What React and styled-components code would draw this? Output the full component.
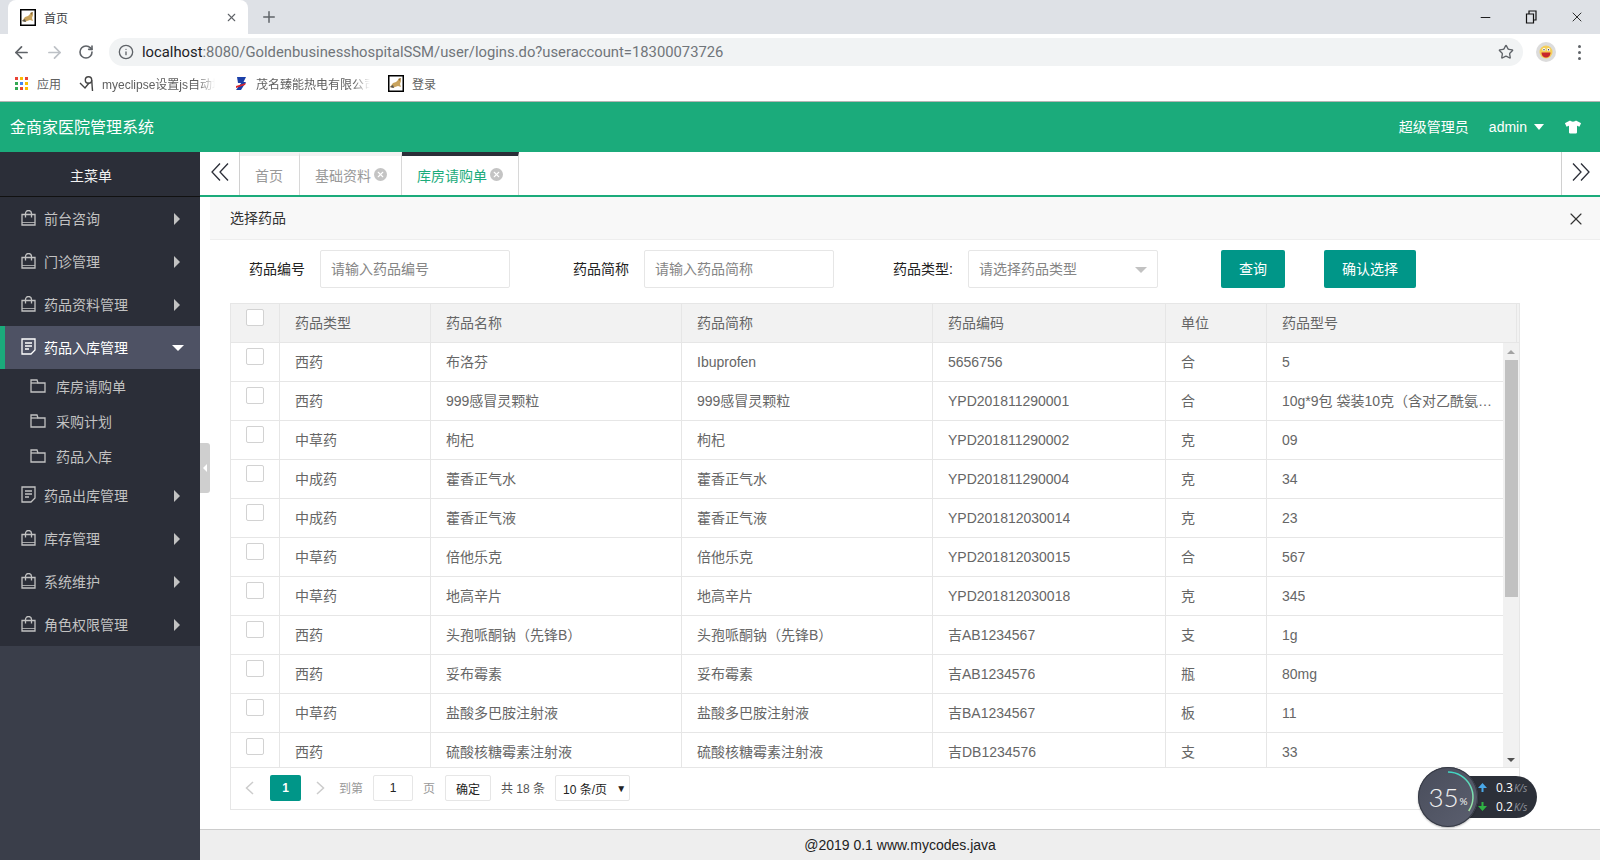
import React from 'react';
import styled, { createGlobalStyle } from 'styled-components';
import { ArrowLeft, ArrowRight, RotateCw, Info, Star, Plus, X, Minus } from 'lucide-react';
import { FaTshirt } from 'react-icons/fa';

const FONT = '"Liberation Sans","Noto Sans CJK SC",sans-serif';
const GREEN = '#1bab7b';
const TEAL = '#009688';
const COLS = '49px 151px 251px 251px 233px 101px 236px';
const HEAD_COLS = '49px 151px 251px 251px 233px 101px 250px 2px';

const Global = createGlobalStyle`
  html, body { margin: 0; padding: 0; overflow: hidden; background: #fff; }
  body { font-family: ${FONT}; font-size: 14px; }
  * { box-sizing: border-box; }
`;

const Page = styled.div`
  position: relative;
  width: 1600px;
  height: 860px;
  display: flex;
  flex-direction: column;
  overflow: hidden;
`;

/* browser chrome */
const TabStrip = styled.div`
  height: 34px;
  flex: none;
  background: #dee1e6;
  display: flex;
  align-items: center;
  padding-left: 8px;
`;
const BrowserTab = styled.div`
  width: 240px;
  height: 34px;
  background: #fff;
  border-radius: 8px 8px 0 0;
  display: flex;
  align-items: center;
  padding: 0 10px 0 12px;
  font-size: 12px;
  color: #3c4043;
`;
const TabTitle = styled.span`
  margin-left: 8px;
  flex: 1;
`;
const NewTab = styled.div`
  width: 18px;
  height: 18px;
  margin-left: 12px;
  color: #5f6368;
  display: flex;
`;
const WindowControls = styled.div`
  margin-left: auto;
  display: flex;
  align-items: center;
  gap: 31px;
  padding-right: 15px;
  color: #111;
`;
const Toolbar = styled.div`
  height: 34px;
  flex: none;
  padding-top: 2px;
  background: #fff;
  display: flex;
  align-items: center;
`;
const NavButtons = styled.div`
  width: 109px;
  flex: none;
  display: flex;
  align-items: center;
  padding-left: 12px;
  gap: 14px;
  color: #5f6368;
`;
const AddressBar = styled.div`
  width: 1414px;
  height: 28px;
  background: #f1f3f4;
  border-radius: 14px;
  display: flex;
  align-items: center;
  padding: 0 9px 0 9px;
  color: #5f6368;
  font-family: Roboto, ${FONT};
  font-size: 14.8px;
`;
const Url = styled.span`
  margin-left: 8px;
  flex: 1;
  color: #70757a;
  b { font-weight: 400; color: #202124; }
`;
const Avatar = styled.div`
  margin-left: 13px;
  width: 20px;
  height: 20px;
`;
const MoreDots = styled.div`
  margin-left: 22px;
  display: flex;
  flex-direction: column;
  gap: 3px;
  i { width: 3px; height: 3px; border-radius: 50%; background: #5f6368; display: block; }
`;
const Bookmarks = styled.div`
  height: 34px;
  flex: none;
  background: #fff;
  border-bottom: 1px solid #b4b4b4;
  display: flex;
  align-items: center;
  padding: 0 0 2px 15px;
  font-size: 12px;
  color: #5f5f5f;
`;
const Bookmark = styled.div`
  display: flex;
  align-items: center;
  width: ${p => p.$w}px;
  flex: none;
`;
const BookmarkLabel = styled.span`
  margin-left: ${p => p.$gap || 8}px;
  white-space: nowrap;
  overflow: hidden;
  max-width: ${p => p.$max || 200}px;
  ${p => p.$fade ? '-webkit-mask-image: linear-gradient(90deg,#000 85%,transparent); mask-image: linear-gradient(90deg,#000 85%,transparent);' : ''}
`;
const AppsGrid = styled.div`
  display: grid;
  grid-template-columns: repeat(3, 3px);
  grid-auto-rows: 3px;
  gap: 2px;
  i { display: block; }
`;

/* app header */
const AppBar = styled.header`
  height: 50px;
  flex: none;
  background: ${GREEN};
  color: #fff;
  display: flex;
  align-items: center;
  padding: 0 19px 0 10px;
`;
const Brand = styled.div`
  font-size: 16px;
  margin-right: auto;
  padding-bottom: 2px;
`;
const Role = styled.span`
  font-size: 14px;
  padding-bottom: 2px;
`;
const UserName = styled.span`
  font-size: 14px;
  margin-left: 20px;
`;
const DownCaret = styled.i`
  width: 0;
  height: 0;
  margin-left: 7px;
  border-left: 5px solid transparent;
  border-right: 5px solid transparent;
  border-top: 6px solid #fff;
`;
const Shirt = styled.div`
  margin-left: 21px;
  display: flex;
  font-size: 16px;
`;

/* sidebar */
const Main = styled.div`
  flex: 1;
  display: flex;
  min-height: 0;
`;
const Sidebar = styled.aside`
  width: 200px;
  flex: none;
  background: #3a3e4a;
`;
const SideHead = styled.div`
  height: 45px;
  background: #2b2e38;
  border-bottom: 1px solid #111;
  color: #f2f2f2;
  display: flex;
  align-items: center;
  justify-content: center;
  padding: 2px 18px 0 0;
`;
const MenuList = styled.nav`
  background: #2b2e38;
`;
const MenuItem = styled.div`
  height: 43px;
  display: flex;
  align-items: center;
  padding: 0 16px 2px 21px;
  color: ${p => p.$active ? '#fff' : '#c2c2c2'};
  background: ${p => p.$active ? '#4e5264' : 'transparent'};
  box-shadow: ${p => p.$active ? `inset 5px 0 0 ${GREEN}` : 'none'};
`;
const MenuText = styled.span`
  margin-left: 8px;
  margin-right: auto;
`;
const RightCaret = styled.i`
  width: 0;
  height: 0;
  margin: 3px 4px 0 0;
  border-top: 6px solid transparent;
  border-bottom: 6px solid transparent;
  border-left: 6px solid #c2c2c2;
`;
const OpenCaret = styled.i`
  width: 0;
  height: 0;
  margin-top: 3px;
  border-left: 6px solid transparent;
  border-right: 6px solid transparent;
  border-top: 6px solid #fff;
`;
const SubItem = styled.div`
  height: 35px;
  display: flex;
  align-items: center;
  padding: 0 0 2px 30px;
  color: #c2c2c2;
`;
const SubText = styled.span`
  margin-left: 10px;
`;

/* page tabs */
const Right = styled.div`
  flex: 1;
  min-width: 0;
  display: flex;
  flex-direction: column;
`;
const PageTabs = styled.div`
  height: 45px;
  flex: none;
  border-bottom: 2px solid ${GREEN};
  display: flex;
  background: #fff;
`;
const ScrollTab = styled.div`
  width: ${p => p.$end ? 39 : 40}px;
  flex: none;
  display: flex;
  justify-content: center;
  padding-top: 11px;
  color: #2b2e38;
  ${p => p.$end ? 'margin-left: auto; border-left: 1px solid #d0d0d0;' : 'border-right: 1px solid #d0d0d0;'}
`;
const PageTab = styled.div`
  width: ${p => p.$w}px;
  flex: none;
  border-top: 4px solid ${p => p.$active ? '#2b2e38' : '#f2f2f2'};
  border-right: 1px solid #d8d8d8;
  display: flex;
  align-items: center;
  padding: 0 0 2px 15px;
  color: ${p => p.$active ? GREEN : '#999'};
`;
const TabClose = styled.i`
  margin-left: 3px;
  width: 13px;
  height: 13px;
  border-radius: 50%;
  background: #c4c4c4;
  color: #fff;
  display: flex;
  align-items: center;
  justify-content: center;
`;

/* panel */
const Content = styled.div`
  position: relative;
  flex: 1;
  min-height: 0;
  padding-left: 10px;
  background: #fff;
  display: flex;
  flex-direction: column;
`;
const Handle = styled.div`
  position: absolute;
  left: 0;
  top: 246px;
  width: 10px;
  height: 50px;
  background: #cfcfcf;
  border-radius: 0 3px 3px 0;
  display: flex;
  align-items: center;
  justify-content: center;
  &::before {
    content: '';
    border-top: 4px solid transparent;
    border-bottom: 4px solid transparent;
    border-right: 4px solid #fff;
  }
`;
const PanelHead = styled.div`
  height: 43px;
  flex: none;
  background: #f8f8f8;
  border-bottom: 1px solid #eee;
  display: flex;
  align-items: center;
  justify-content: space-between;
  padding: 0 14px 2px 20px;
  color: #333;
`;
const PanelClose = styled(X)`
  margin-top: 3px;
`;
const Filters = styled.div`
  display: flex;
  align-items: center;
  padding: 10px 0 15px 39px;
`;
const FilterLabel = styled.label`
  width: ${p => p.$w}px;
  flex: none;
  padding-bottom: 2px;
  color: #222;
`;
const TextField = styled.input`
  width: ${p => p.$w}px;
  height: 38px;
  flex: none;
  margin-right: ${p => p.$mr}px;
  border: 1px solid #e6e6e6;
  border-radius: 2px;
  padding: 0 10px;
  font: 14px ${FONT};
  outline: none;
  &::placeholder { color: #858585; opacity: 1; }
`;
const SelectField = styled.div`
  width: 190px;
  height: 38px;
  flex: none;
  margin-right: 63px;
  border: 1px solid #e6e6e6;
  border-radius: 2px;
  padding: 0 10px 2px;
  display: flex;
  align-items: center;
  justify-content: space-between;
  color: #858585;
  &::after {
    content: '';
    margin-top: 3px;
    border-left: 6px solid transparent;
    border-right: 6px solid transparent;
    border-top: 6px solid #c2c2c2;
  }
`;
const PrimaryButton = styled.button`
  width: ${p => p.$w}px;
  height: 38px;
  flex: none;
  margin-right: ${p => p.$mr || 0}px;
  border: 0;
  border-radius: 2px;
  padding: 0 0 2px;
  background: ${TEAL};
  color: #fff;
  font: 14px ${FONT};
`;

/* table */
const TableBox = styled.div`
  width: 1290px;
  height: 507px;
  margin-left: 20px;
  border: 1px solid #e6e6e6;
  display: flex;
  flex-direction: column;
`;
const HeadRow = styled.div`
  height: 39px;
  flex: none;
  display: grid;
  grid-template-columns: ${HEAD_COLS};
  background: #f2f2f2;
  border-bottom: 1px solid #e6e6e6;
`;
const BodyWrap = styled.div`
  height: 424px;
  flex: none;
  display: flex;
`;
const Rows = styled.div`
  width: 1272px;
  flex: none;
  overflow: hidden;
`;
const Row = styled.div`
  height: 39px;
  display: grid;
  grid-template-columns: ${COLS};
  border-bottom: 1px solid #e6e6e6;
`;
const Cell = styled.div`
  border-right: ${p => p.$last ? '0' : '1px solid #e6e6e6'};
  padding: 0 ${p => p.$last ? 10 : 15}px ${p => p.$cjk ? 2 : 0}px 15px;
  color: #666;
  display: flex;
  align-items: center;
  min-width: 0;
  span {
    white-space: nowrap;
    overflow: hidden;
    text-overflow: ellipsis;
  }
`;
const CheckCell = styled.div`
  border-right: 1px solid #e6e6e6;
  padding: 5px 0 0 15px;
`;
const Check = styled.div`
  width: 18px;
  height: 17px;
  background: #fff;
  border: 1px solid #d2d2d2;
  border-radius: 2px;
`;
const Scrollbar = styled.div`
  width: 16px;
  flex: none;
  background: #f1f1f1;
  display: flex;
  flex-direction: column;
  align-items: center;
`;
const ScrollUp = styled.i`
  margin: 7px 0 6px;
  border-left: 4px solid transparent;
  border-right: 4px solid transparent;
  border-bottom: 4px solid #a3a3a3;
`;
const ScrollThumb = styled.div`
  width: 13px;
  height: 237px;
  background: #c1c1c1;
`;
const ScrollDown = styled.i`
  margin-top: auto;
  margin-bottom: 5px;
  border-left: 4px solid transparent;
  border-right: 4px solid transparent;
  border-top: 4px solid #505050;
`;
const Pager = styled.div`
  height: 42px;
  flex: none;
  border-top: 1px solid #e6e6e6;
  padding: 0 0 1px 14px;
  display: flex;
  align-items: center;
  font-size: 12px;
  color: #555;
`;
const PageArrow = styled.div`
  width: ${p => p.$w}px;
  flex: none;
  display: flex;
  color: #ccc;
`;
const CurrentPage = styled.div`
  width: 31px;
  height: 26px;
  flex: none;
  background: ${TEAL};
  border-radius: 2px;
  color: #fff;
  font-weight: 700;
  display: flex;
  align-items: center;
  justify-content: center;
`;
const PagerText = styled.span`
  margin-right: ${p => p.$mr}px;
  padding-bottom: 2px;
  color: ${p => p.$c || '#999'};
  flex: none;
`;
const PagerBox = styled.div`
  width: ${p => p.$w}px;
  height: 26px;
  flex: none;
  margin-right: ${p => p.$mr || 0}px;
  border: 1px solid #e6e6e6;
  border-radius: 2px;
  display: flex;
  align-items: center;
  justify-content: ${p => p.$between ? 'space-between' : 'center'};
  padding: ${p => p.$between ? '0 3px 0 7px' : '0'};
  color: #222;
`;
const SmallArrow = styled.span`
  font-size: 10px;
`;
const FooterBar = styled.footer`
  height: 31px;
  flex: none;
  margin-left: -10px;
  margin-top: auto;
  background: #eee;
  border-top: 1px solid #ccc;
  display: flex;
  align-items: center;
  justify-content: center;
  color: #222;
`;

/* floating speed widget */
const SpeedWidget = styled.div`
  position: absolute;
  left: 1418px;
  top: 767px;
  width: 120px;
  height: 60px;
  display: flex;
  align-items: center;
`;
const SpeedPill = styled.div`
  position: absolute;
  left: 30px;
  top: 9px;
  width: 89px;
  height: 42px;
  background: #2c3039;
  border-radius: 0 21px 21px 0;
  padding-left: 33px;
  display: flex;
  flex-direction: column;
  justify-content: center;
  gap: 5px;
`;
const SpeedLine = styled.div`
  display: flex;
  align-items: center;
  color: #fff;
  font: 12px "Open Sans", sans-serif;
  line-height: 14px;
  em { font-size: 10px; color: #8c909a; margin-left: 1px; }
`;
const SpeedArrow = styled.div`
  width: 9px;
  margin-right: 9px;
  margin-left: -3px;
  display: flex;
  color: ${p => p.$c};
`;
const Gauge = styled.div`
  position: relative;
  width: 60px;
  height: 60px;
  border-radius: 50%;
  background: linear-gradient(135deg, #494d5b, #5b5f6f);
  box-shadow: inset 0 0 0 1px #363a45, 0 1px 2px rgba(0,0,0,.3);
  display: flex;
  align-items: center;
  justify-content: center;
  color: #f2f2f2;
  font: 300 26px Lato, sans-serif;
  small { font-size: 10px; font-weight: 400; margin: 7px 0 0 1px; }
`;
const GaugeRing = styled.svg`
  position: absolute;
  inset: 0;
`;

const ArrowUp = () => (
  <svg width="9" height="9" viewBox="0 0 9 9" fill="currentColor"><path d="M4.500 0L9 5H5.500v4h-2V5H0z" /></svg>
);
const ArrowDown = () => (
  <svg width="9" height="9" viewBox="0 0 9 9" fill="currentColor"><path d="M4.500 9L0 4h3.500V0h2v4H9z" /></svg>
);
const Tomcat = () => (
  <svg width="16" height="17" viewBox="0 0 16 17">
    <rect x=".75" y=".75" width="14.5" height="15.5" fill="#fff" stroke="#000" strokeWidth="1.5" />
    <path d="M2 12l3-4 3-1 3-3 1-1 1 3-1 3 1 3-3-1-3 1-2 1z" fill="#c9a35c" />
    <path d="M2 12l3-2 1 3z" fill="#555" />
    <path d="M10 4l3-1-1 3z" fill="#8c6a2e" />
  </svg>
);
const Eclipse = () => (
  <svg width="15" height="18" viewBox="0 0 15 18" fill="none" stroke="#444" strokeWidth="1.4">
    <circle cx="9.5" cy="5" r="3.2" />
    <path d="M12.700 5l.8 11" />
    <path d="M1 8l5 5 4-5" />
  </svg>
);
const Company = () => (
  <svg width="13" height="15" viewBox="0 0 13 15">
    <path d="M2 1h9L8 7H3z" fill="#1b3fa8" />
    <path d="M7 6h4L6 14H1z" fill="#1b3fa8" />
    <path d="M1 10l10-3-1 2-9 3z" fill="#d9262c" />
  </svg>
);
const Face = () => (
  <svg width="20" height="20" viewBox="0 0 20 20">
    <circle cx="10" cy="10" r="10" fill="#dcdcdc" />
    <circle cx="10" cy="10" r="6.5" fill="#f5cf5a" />
    <circle cx="8" cy="7.5" r="1.6" fill="#fff" /><circle cx="12.5" cy="7.5" r="1.6" fill="#fff" />
    <circle cx="8" cy="7.7" r=".7" fill="#333" /><circle cx="12.5" cy="7.7" r=".7" fill="#333" />
    <path d="M5.500 10.500h9c0 3-2 5-4.500 5s-4.500-2-4.500-5z" fill="#c8262c" />
  </svg>
);
const Bag = () => (
  <svg width="15" height="16" viewBox="0 0 15 16" fill="none" stroke="currentColor" strokeWidth="1.3">
    <path d="M1 4.500h13V15H1z" />
    <path d="M4.500 7.500V3.500a3 3 0 0 1 6 0v4" />
    <path d="M1 12.500h13" strokeWidth=".8" />
  </svg>
);
const Doc = () => (
  <svg width="15" height="17" viewBox="0 0 15 17" fill="none" stroke="currentColor" strokeWidth="1.3">
    <path d="M1 1h13v11l-4 4H1z" />
    <path d="M4 5h7M4 8h7M4 11h4" />
  </svg>
);
const Folder = () => (
  <svg width="16" height="14" viewBox="0 0 16 14" fill="none" stroke="currentColor" strokeWidth="1.3">
    <path d="M1 1h6l1 3h7v9H1z" />
    <path d="M1 4h7" />
  </svg>
);
const DoubleAngle = ({ dir }) => (
  <svg width="18" height="18" viewBox="0 0 18 18" fill="none" stroke="currentColor" strokeWidth="1.300"
    style={dir === 'right' ? { transform: 'scaleX(-1)' } : undefined}>
    <path d="M9 .5L1 9l8 8.500" /><path d="M17 .5L9 9l8 8.500" />
  </svg>
);
const Chev = ({ right }) => (
  <svg width="9" height="14" viewBox="0 0 9 14" fill="none" stroke="currentColor" strokeWidth="1.500">
    <path d={right ? 'M1 1l6.500 6L1 13' : 'M8 1L1.500 7 8 13'} />
  </svg>
);

const MENU_TOP = [
  ['前台咨询', Bag],
  ['门诊管理', Bag],
  ['药品资料管理', Bag],
];
const MENU_BOTTOM = [
  ['药品出库管理', Doc],
  ['库存管理', Bag],
  ['系统维护', Bag],
  ['角色权限管理', Bag],
];
const SUB = ['库房请购单', '采购计划', '药品入库'];
const APP_COLORS = ['#ea4335', '#fbbc04', '#ea4335', '#34a853', '#4285f4', '#fbbc04', '#34a853', '#ea4335', '#fbbc04'];
const HEADERS = ['药品类型', '药品名称', '药品简称', '药品编码', '单位', '药品型号'];
const ROWS = [
  ['西药', '布洛芬', 'Ibuprofen', '5656756', '合', '5'],
  ['西药', '999感冒灵颗粒', '999感冒灵颗粒', 'YPD201811290001', '合', '10g*9包 袋装10克（含对乙酰氨基酚168毫克）'],
  ['中草药', '枸杞', '枸杞', 'YPD201811290002', '克', '09'],
  ['中成药', '藿香正气水', '藿香正气水', 'YPD201811290004', '克', '34'],
  ['中成药', '藿香正气液', '藿香正气液', 'YPD201812030014', '克', '23'],
  ['中草药', '倍他乐克', '倍他乐克', 'YPD201812030015', '合', '567'],
  ['中草药', '地高辛片', '地高辛片', 'YPD201812030018', '克', '345'],
  ['西药', '头孢哌酮钠（先锋B）', '头孢哌酮钠（先锋B）', '吉AB1234567', '支', '1g'],
  ['西药', '妥布霉素', '妥布霉素', '吉AB1234576', '瓶', '80mg'],
  ['中草药', '盐酸多巴胺注射液', '盐酸多巴胺注射液', '吉BA1234567', '板', '11'],
  ['西药', '硫酸核糖霉素注射液', '硫酸核糖霉素注射液', '吉DB1234576', '支', '33'],
];
const hasCjk = s => /[\u4e00-\u9fff]/.test(s);

const Menu = ({ label, Icon }) => (
  <MenuItem>
    <Icon />
    <MenuText>{label}</MenuText>
    <RightCaret />
  </MenuItem>
);

export default function App() {
  return (
    <Page>
      <Global />
      <TabStrip>
        <BrowserTab>
          <Tomcat />
          <TabTitle>首页</TabTitle>
          <X size={13} strokeWidth={2} color="#5f6368" />
        </BrowserTab>
        <NewTab><Plus size={18} strokeWidth={2} /></NewTab>
        <WindowControls>
          <Minus size={15} strokeWidth={1.500} />
          <svg width="14" height="14" viewBox="0 0 14 14" fill="none" stroke="#111" strokeWidth="1.200"><path d="M2.500 4h7v9h-7zM5 4V1h7v9H9.500" /></svg>
          <X size={16} strokeWidth={1.300} />
        </WindowControls>
      </TabStrip>
      <Toolbar>
        <NavButtons>
          <ArrowLeft size={19} strokeWidth={2.200} />
          <ArrowRight size={19} strokeWidth={2.200} color="#bdc1c6" />
          <RotateCw size={16} strokeWidth={2.400} />
        </NavButtons>
        <AddressBar>
          <Info size={16} strokeWidth={2} />
          <Url><b>localhost</b>:8080/GoldenbusinesshospitalSSM/user/logins.do?useraccount=18300073726</Url>
          <Star size={16} strokeWidth={2} />
        </AddressBar>
        <Avatar><Face /></Avatar>
        <MoreDots><i /><i /><i /></MoreDots>
      </Toolbar>
      <Bookmarks>
        <Bookmark $w={64}>
          <AppsGrid>{APP_COLORS.map((c, i) => <i key={i} style={{ background: c }} />)}</AppsGrid>
          <BookmarkLabel $gap={9}>应用</BookmarkLabel>
        </Bookmark>
        <Bookmark $w={156}>
          <Eclipse />
          <BookmarkLabel $fade $max={113}>myeclipse设置js自动填充</BookmarkLabel>
        </Bookmark>
        <Bookmark $w={153}>
          <Company />
          <BookmarkLabel $fade $max={114}>茂名臻能热电有限公司</BookmarkLabel>
        </Bookmark>
        <Bookmark $w={60}>
          <Tomcat />
          <BookmarkLabel>登录</BookmarkLabel>
        </Bookmark>
      </Bookmarks>

      <AppBar>
        <Brand>金商家医院管理系统</Brand>
        <Role>超级管理员</Role>
        <UserName>admin</UserName>
        <DownCaret />
        <Shirt><FaTshirt /></Shirt>
      </AppBar>

      <Main>
        <Sidebar>
          <SideHead>主菜单</SideHead>
          <MenuList>
            {MENU_TOP.map(([l, I]) => <Menu key={l} label={l} Icon={I} />)}
            <MenuItem $active>
              <Doc />
              <MenuText>药品入库管理</MenuText>
              <OpenCaret />
            </MenuItem>
            {SUB.map(s => (
              <SubItem key={s}><Folder /><SubText>{s}</SubText></SubItem>
            ))}
            {MENU_BOTTOM.map(([l, I]) => <Menu key={l} label={l} Icon={I} />)}
          </MenuList>
        </Sidebar>
        <Right>
          <PageTabs>
            <ScrollTab><DoubleAngle /></ScrollTab>
            <PageTab $w={60}>首页</PageTab>
            <PageTab $w={102}>基础资料<TabClose><X size={9} strokeWidth={3} /></TabClose></PageTab>
            <PageTab $w={117} $active>库房请购单<TabClose><X size={9} strokeWidth={3} /></TabClose></PageTab>
            <ScrollTab $end><DoubleAngle dir="right" /></ScrollTab>
          </PageTabs>
          <Content>
            <Handle />
            <PanelHead>
              选择药品
              <PanelClose size={20} strokeWidth={1.400} color="#333" />
            </PanelHead>
            <Filters>
              <FilterLabel $w={71}>药品编号</FilterLabel>
              <TextField $w={190} $mr={63} placeholder="请输入药品编号" readOnly />
              <FilterLabel $w={71}>药品简称</FilterLabel>
              <TextField $w={190} $mr={59} placeholder="请输入药品简称" readOnly />
              <FilterLabel $w={75}>药品类型:</FilterLabel>
              <SelectField>请选择药品类型</SelectField>
              <PrimaryButton $w={64} $mr={39}>查询</PrimaryButton>
              <PrimaryButton $w={92}>确认选择</PrimaryButton>
            </Filters>
            <TableBox>
              <HeadRow>
                <CheckCell><Check /></CheckCell>
                {HEADERS.map(h => <Cell key={h} $cjk><span>{h}</span></Cell>)}
                <div />
              </HeadRow>
              <BodyWrap>
                <Rows>
                  {ROWS.map((r, i) => (
                    <Row key={i}>
                      <CheckCell><Check /></CheckCell>
                      {r.map((c, j) => <Cell key={j} $last={j === 5} $cjk={hasCjk(c)}><span>{c}</span></Cell>)}
                    </Row>
                  ))}
                </Rows>
                <Scrollbar>
                  <ScrollUp />
                  <ScrollThumb />
                  <ScrollDown />
                </Scrollbar>
              </BodyWrap>
              <Pager>
                <PageArrow $w={25}><Chev /></PageArrow>
                <CurrentPage>1</CurrentPage>
                <PageArrow $w={38}><svg width="15" height="14" /><Chev right /></PageArrow>
                <PagerText $mr={10}>到第</PagerText>
                <PagerBox $w={40} $mr={10}>1</PagerBox>
                <PagerText $mr={10}>页</PagerText>
                <PagerBox $w={46} $mr={10}>确定</PagerBox>
                <PagerText $mr={10} $c="#555">共 18 条</PagerText>
                <PagerBox $w={75} $between>10 条/页<SmallArrow>▼</SmallArrow></PagerBox>
              </Pager>
            </TableBox>
            <FooterBar>@2019 0.1 www.mycodes.java</FooterBar>
          </Content>
        </Right>
      </Main>

      <SpeedWidget>
        <SpeedPill>
          <SpeedLine>
            <SpeedArrow $c="#4aa8e8"><ArrowUp /></SpeedArrow>0.3<em>K/s</em>
          </SpeedLine>
          <SpeedLine>
            <SpeedArrow $c="#2fb344"><ArrowDown /></SpeedArrow>0.2<em>K/s</em>
          </SpeedLine>
        </SpeedPill>
        <Gauge>
          <GaugeRing width="60" height="60" viewBox="0 0 60 60" fill="none">
            <defs>
              <linearGradient id="ring" x1="0" y1="0" x2="0" y2="1">
                <stop offset="0" stopColor="#3fd6c4" />
                <stop offset="1" stopColor="#a8e6a0" />
              </linearGradient>
            </defs>
            <path d="M30 5a25 25 0 0 1 20.700 39" stroke="url(#ring)" strokeWidth="1.500" />
          </GaugeRing>
          35<small>%</small>
        </Gauge>
      </SpeedWidget>
    </Page>
  );
}
